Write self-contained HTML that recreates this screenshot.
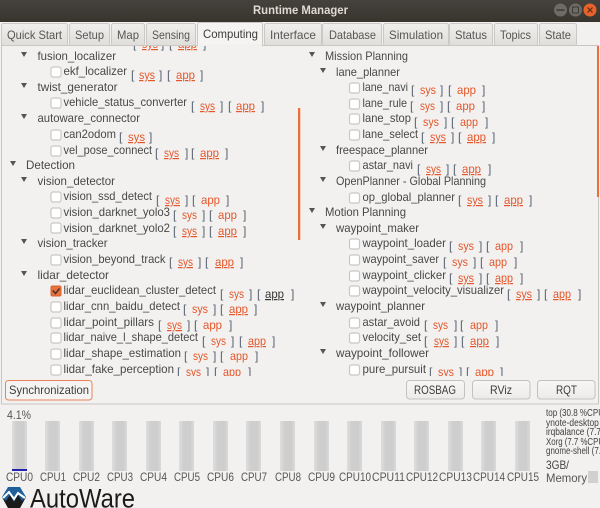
<!DOCTYPE html>
<html><head><meta charset="utf-8"><title>Runtime Manager</title>
<style>
html,body{margin:0;padding:0;background:#f2f1f0;width:600px;height:508px;overflow:hidden}
svg{display:block}
text{font-family:"Liberation Sans",sans-serif;font-size:12px;fill:#484848;white-space:pre}
.t{fill:#565654}
.b{fill:#566270}
.o{fill:#e4562a}
.u{fill:#e4562a;text-decoration:underline}
.d{fill:#333;text-decoration:underline}
.c{fill:#fff;stroke:#c9c7c4;stroke-width:1.200}
.p{font-size:10px;fill:#404040}
</style></head><body>
<svg xmlns="http://www.w3.org/2000/svg" width="600" height="508" viewBox="0 0 600 508">
<defs>
<linearGradient id="tb" x1="0" y1="0" x2="0" y2="1"><stop offset="0" stop-color="#45423c"/><stop offset="1" stop-color="#38352f"/></linearGradient>
<linearGradient id="tg" x1="0" y1="0" x2="0" y2="1"><stop offset="0" stop-color="#f0efed"/><stop offset="1" stop-color="#dfdedb"/></linearGradient>
<linearGradient id="bg" x1="0" y1="0" x2="1" y2="0"><stop offset="0" stop-color="#dedede"/><stop offset=".3" stop-color="#cfcfcf"/><stop offset=".75" stop-color="#cdcdcd"/><stop offset="1" stop-color="#dadada"/></linearGradient>
<linearGradient id="btn" x1="0" y1="0" x2="0" y2="1"><stop offset="0" stop-color="#f8f7f6"/><stop offset="1" stop-color="#ecebe9"/></linearGradient>
<clipPath id="tree"><rect x="2" y="46" width="596" height="330"/></clipPath>
<clipPath id="topc"><rect x="540" y="405" width="60" height="52"/></clipPath>
<path id="tri" d="M0 0H6L3 5Z" fill="#555"/>
</defs>
<rect width="600" height="508" fill="#f2f1f0"/>
<!-- title bar -->
<rect width="600" height="22" fill="url(#tb)"/>
<text x="253" y="14" textLength="95" lengthAdjust="spacingAndGlyphs" style="font-weight:bold;fill:#dfdbd2">Runtime Manager</text>
<circle cx="560.500" cy="10" r="6.500" fill="#6d6b64"/><rect x="556.500" y="9.300" width="8" height="1.500" fill="#3b3a35"/>
<circle cx="575.500" cy="10" r="6.500" fill="#6d6b64"/><rect x="572.500" y="7" width="6" height="6" fill="none" stroke="#3b3a35"/>
<circle cx="590" cy="10" r="6.500" fill="#e8622b"/><path d="M587.500 7.500l5 5m0-5l-5 5" stroke="#5c2a12" stroke-width="1.200"/>
<!-- panel -->
<rect x="1.500" y="45.500" width="597" height="358.500" fill="#f2f1f0" stroke="#c8c6c3"/>
<!-- tabs -->
<g fill="url(#tg)" stroke="#cbc9c5">
<rect x="1.500" y="23.500" width="66" height="22" rx="2"/>
<rect x="69.500" y="23.500" width="40" height="22" rx="2"/>
<rect x="111.500" y="23.500" width="33" height="22" rx="2"/>
<rect x="146.500" y="23.500" width="49" height="22" rx="2"/>
<rect x="264.500" y="23.500" width="57" height="22" rx="2"/>
<rect x="322.500" y="23.500" width="59" height="22" rx="2"/>
<rect x="383.500" y="23.500" width="65" height="22" rx="2"/>
<rect x="449.500" y="23.500" width="43" height="22" rx="2"/>
<rect x="494.500" y="23.500" width="43" height="22" rx="2"/>
<rect x="539.500" y="23.500" width="37" height="22" rx="2"/>
</g>
<rect x="197.500" y="22.500" width="65" height="24" rx="2" fill="#f5f4f3" stroke="#cbc9c5"/>
<rect x="198" y="44" width="64" height="3" fill="#f2f1f0"/>
<g class="tabs">
<text class="t" x="7" y="39" textLength="55" lengthAdjust="spacingAndGlyphs">Quick Start</text>
<text class="t" x="75" y="39" textLength="29" lengthAdjust="spacingAndGlyphs">Setup</text>
<text class="t" x="117" y="39" textLength="22" lengthAdjust="spacingAndGlyphs">Map</text>
<text class="t" x="152" y="39" textLength="38" lengthAdjust="spacingAndGlyphs">Sensing</text>
<text x="203" y="38" textLength="55" lengthAdjust="spacingAndGlyphs" style="fill:#3c3c3c">Computing</text>
<text class="t" x="270" y="39" textLength="46" lengthAdjust="spacingAndGlyphs">Interface</text>
<text class="t" x="329" y="39" textLength="47" lengthAdjust="spacingAndGlyphs">Database</text>
<text class="t" x="389" y="39" textLength="54" lengthAdjust="spacingAndGlyphs">Simulation</text>
<text class="t" x="455" y="39" textLength="32" lengthAdjust="spacingAndGlyphs">Status</text>
<text class="t" x="500" y="39" textLength="31" lengthAdjust="spacingAndGlyphs">Topics</text>
<text class="t" x="545" y="39" textLength="26" lengthAdjust="spacingAndGlyphs">State</text>
</g>
<!-- scrollbars -->
<rect x="298" y="108" width="2" height="132" fill="#e8703c"/>
<rect x="300" y="108" width="1" height="132" fill="#f6cdb8"/>
<rect x="597" y="46" width="2" height="151" fill="#e8703c"/>
<g clip-path="url(#tree)">
<!-- left tree -->
<text class="b" x="133" y="48">[</text><text class="u" x="142" y="48" textLength="16" lengthAdjust="spacingAndGlyphs">sys</text><text class="b" x="161" y="48">]</text><text class="b" x="169" y="48">[</text><text class="u" x="178" y="48" textLength="19" lengthAdjust="spacingAndGlyphs">app</text><text class="b" x="203" y="48">]</text>
<use href="#tri" x="21" y="52"/><text x="37.500" y="60" textLength="78.500" lengthAdjust="spacingAndGlyphs">fusion_localizer</text>
<rect class="c" x="51" y="67" width="10" height="10" rx="2"/><text x="63.500" y="75" textLength="63.500" lengthAdjust="spacingAndGlyphs">ekf_localizer</text>
<text class="b" x="131" y="79">[</text><text class="u" x="139" y="79" textLength="16" lengthAdjust="spacingAndGlyphs">sys</text><text class="b" x="159" y="79">]</text><text class="b" x="167" y="79">[</text><text class="u" x="176" y="79" textLength="19" lengthAdjust="spacingAndGlyphs">app</text><text class="b" x="200" y="79">]</text>
<use href="#tri" x="21" y="83"/><text x="37.500" y="91" textLength="80" lengthAdjust="spacingAndGlyphs">twist_generator</text>
<rect class="c" x="51" y="98" width="10" height="10" rx="2"/><text x="63.500" y="106" textLength="123.500" lengthAdjust="spacingAndGlyphs">vehicle_status_converter</text>
<text class="b" x="191" y="110">[</text><text class="u" x="200" y="110" textLength="15" lengthAdjust="spacingAndGlyphs">sys</text><text class="b" x="220" y="110">]</text><text class="b" x="228" y="110">[</text><text class="u" x="236" y="110" textLength="19" lengthAdjust="spacingAndGlyphs">app</text><text class="b" x="261" y="110">]</text>
<use href="#tri" x="21" y="114"/><text x="37.500" y="122" textLength="102.500" lengthAdjust="spacingAndGlyphs">autoware_connector</text>
<rect class="c" x="51" y="130" width="10" height="10" rx="2"/><text x="63.500" y="138" textLength="52.500" lengthAdjust="spacingAndGlyphs">can2odom</text>
<text class="b" x="119" y="141">[</text><text class="u" x="128" y="141" textLength="17" lengthAdjust="spacingAndGlyphs">sys</text><text class="b" x="149" y="141">]</text>
<rect class="c" x="51" y="146" width="10" height="10" rx="2"/><text x="63.500" y="154" textLength="88.500" lengthAdjust="spacingAndGlyphs">vel_pose_connect</text>
<text class="b" x="155" y="157">[</text><text class="u" x="164" y="157" textLength="15" lengthAdjust="spacingAndGlyphs">sys</text><text class="b" x="185" y="157">]</text><text class="b" x="191" y="157">[</text><text class="u" x="200" y="157" textLength="19" lengthAdjust="spacingAndGlyphs">app</text><text class="b" x="225" y="157">]</text>
<use href="#tri" x="10" y="161"/><text x="26" y="169" textLength="49" lengthAdjust="spacingAndGlyphs">Detection</text>
<use href="#tri" x="21" y="177"/><text x="37.500" y="185" textLength="77.500" lengthAdjust="spacingAndGlyphs">vision_detector</text>
<rect class="c" x="51" y="192" width="10" height="10" rx="2"/><text x="63.500" y="200" textLength="88.500" lengthAdjust="spacingAndGlyphs">vision_ssd_detect</text>
<text class="b" x="156" y="204">[</text><text class="u" x="165" y="204" textLength="15" lengthAdjust="spacingAndGlyphs">sys</text><text class="b" x="185" y="204">]</text><text class="b" x="192" y="204">[</text><text class="o" x="201" y="204" textLength="19" lengthAdjust="spacingAndGlyphs">app</text><text class="b" x="226" y="204">]</text>
<rect class="c" x="51" y="208" width="10" height="10" rx="2"/><text x="63.500" y="216" textLength="106.500" lengthAdjust="spacingAndGlyphs">vision_darknet_yolo3</text>
<text class="b" x="173" y="219">[</text><text class="o" x="182" y="219" textLength="15" lengthAdjust="spacingAndGlyphs">sys</text><text class="b" x="202" y="219">]</text><text class="b" x="209" y="219">[</text><text class="o" x="218" y="219" textLength="19" lengthAdjust="spacingAndGlyphs">app</text><text class="b" x="243" y="219">]</text>
<rect class="c" x="51" y="223" width="10" height="10" rx="2"/><text x="63.500" y="232" textLength="106.500" lengthAdjust="spacingAndGlyphs">vision_darknet_yolo2</text>
<text class="b" x="173" y="235">[</text><text class="u" x="182" y="235" textLength="15" lengthAdjust="spacingAndGlyphs">sys</text><text class="b" x="202" y="235">]</text><text class="b" x="209" y="235">[</text><text class="u" x="218" y="235" textLength="19" lengthAdjust="spacingAndGlyphs">app</text><text class="b" x="243" y="235">]</text>
<use href="#tri" x="21" y="239"/><text x="37.500" y="247" textLength="70" lengthAdjust="spacingAndGlyphs">vision_tracker</text>
<rect class="c" x="51" y="255" width="10" height="10" rx="2"/><text x="63.500" y="263" textLength="102" lengthAdjust="spacingAndGlyphs">vision_beyond_track</text>
<text class="b" x="169" y="266">[</text><text class="u" x="178" y="266" textLength="15" lengthAdjust="spacingAndGlyphs">sys</text><text class="b" x="198" y="266">]</text><text class="b" x="205" y="266">[</text><text class="u" x="215" y="266" textLength="19" lengthAdjust="spacingAndGlyphs">app</text><text class="b" x="240" y="266">]</text>
<use href="#tri" x="21" y="271"/><text x="37.500" y="279" textLength="71.500" lengthAdjust="spacingAndGlyphs">lidar_detector</text>
<rect x="51" y="286" width="10" height="10" rx="1.500" fill="#e8703c" stroke="#d8602c"/><path d="M52.800 290.500l2.700 3 4-5" fill="none" stroke="#4a3028" stroke-width="1.500"/>
<text x="63.500" y="294" textLength="152.500" lengthAdjust="spacingAndGlyphs">lidar_euclidean_cluster_detect</text>
<text class="b" x="220" y="298">[</text><text class="o" x="229" y="298" textLength="15" lengthAdjust="spacingAndGlyphs">sys</text><text class="b" x="249" y="298">]</text><text class="b" x="257" y="298">[</text><text class="d" x="265" y="298" textLength="19" lengthAdjust="spacingAndGlyphs">app</text><text class="b" x="291" y="298">]</text>
<rect class="c" x="51" y="302" width="10" height="10" rx="2"/><text x="63.500" y="310" textLength="116.500" lengthAdjust="spacingAndGlyphs">lidar_cnn_baidu_detect</text>
<text class="b" x="183" y="313">[</text><text class="o" x="192" y="313" textLength="16" lengthAdjust="spacingAndGlyphs">sys</text><text class="b" x="213" y="313">]</text><text class="b" x="220" y="313">[</text><text class="u" x="229" y="313" textLength="19" lengthAdjust="spacingAndGlyphs">app</text><text class="b" x="254" y="313">]</text>
<rect class="c" x="51" y="318" width="10" height="10" rx="2"/><text x="63.500" y="326" textLength="90.500" lengthAdjust="spacingAndGlyphs">lidar_point_pillars</text>
<text class="b" x="158" y="329">[</text><text class="u" x="167" y="329" textLength="15" lengthAdjust="spacingAndGlyphs">sys</text><text class="b" x="187" y="329">]</text><text class="b" x="194" y="329">[</text><text class="o" x="203" y="329" textLength="19" lengthAdjust="spacingAndGlyphs">app</text><text class="b" x="229" y="329">]</text>
<rect class="c" x="51" y="333" width="10" height="10" rx="2"/><text x="63.500" y="341" textLength="134.500" lengthAdjust="spacingAndGlyphs">lidar_naive_l_shape_detect</text>
<text class="b" x="202" y="345">[</text><text class="o" x="211" y="345" textLength="15" lengthAdjust="spacingAndGlyphs">sys</text><text class="b" x="231" y="345">]</text><text class="b" x="239" y="345">[</text><text class="u" x="248" y="345" textLength="18" lengthAdjust="spacingAndGlyphs">app</text><text class="b" x="272" y="345">]</text>
<rect class="c" x="51" y="349" width="10" height="10" rx="2"/><text x="63.500" y="357" textLength="117.500" lengthAdjust="spacingAndGlyphs">lidar_shape_estimation</text>
<text class="b" x="184" y="360">[</text><text class="o" x="193" y="360" textLength="15" lengthAdjust="spacingAndGlyphs">sys</text><text class="b" x="213" y="360">]</text><text class="b" x="220" y="360">[</text><text class="o" x="230" y="360" textLength="18" lengthAdjust="spacingAndGlyphs">app</text><text class="b" x="255" y="360">]</text>
<rect class="c" x="51" y="365" width="10" height="10" rx="2"/><text x="63.500" y="373" textLength="110.500" lengthAdjust="spacingAndGlyphs">lidar_fake_perception</text>
<text class="b" x="177" y="376">[</text><text class="o" x="186" y="376" textLength="15" lengthAdjust="spacingAndGlyphs">sys</text><text class="b" x="206" y="376">]</text><text class="b" x="214" y="376">[</text><text class="o" x="223" y="376" textLength="18" lengthAdjust="spacingAndGlyphs">app</text><text class="b" x="248" y="376">]</text>
<!-- right tree -->
<use href="#tri" x="309" y="52"/><text x="325" y="60" textLength="83" lengthAdjust="spacingAndGlyphs">Mission Planning</text>
<use href="#tri" x="320" y="68"/><text x="336" y="76" textLength="64" lengthAdjust="spacingAndGlyphs">lane_planner</text>
<rect class="c" x="349.500" y="83" width="10" height="10" rx="2"/><text x="362.500" y="91" textLength="45.500" lengthAdjust="spacingAndGlyphs">lane_navi</text>
<text class="b" x="411" y="94">[</text><text class="o" x="420" y="94" textLength="16" lengthAdjust="spacingAndGlyphs">sys</text><text class="b" x="440" y="94">]</text><text class="b" x="448" y="94">[</text><text class="o" x="457" y="94" textLength="19" lengthAdjust="spacingAndGlyphs">app</text><text class="b" x="482" y="94">]</text>
<rect class="c" x="349.500" y="99" width="10" height="10" rx="2"/><text x="362.500" y="107" textLength="44.500" lengthAdjust="spacingAndGlyphs">lane_rule</text>
<text class="b" x="410" y="110">[</text><text class="o" x="420" y="110" textLength="15" lengthAdjust="spacingAndGlyphs">sys</text><text class="b" x="440" y="110">]</text><text class="b" x="447" y="110">[</text><text class="o" x="456" y="110" textLength="19" lengthAdjust="spacingAndGlyphs">app</text><text class="b" x="482" y="110">]</text>
<rect class="c" x="349.500" y="114" width="10" height="10" rx="2"/><text x="362.500" y="122" textLength="48.500" lengthAdjust="spacingAndGlyphs">lane_stop</text>
<text class="b" x="414" y="126">[</text><text class="o" x="423" y="126" textLength="16" lengthAdjust="spacingAndGlyphs">sys</text><text class="b" x="444" y="126">]</text><text class="b" x="451" y="126">[</text><text class="o" x="460" y="126" textLength="18" lengthAdjust="spacingAndGlyphs">app</text><text class="b" x="485" y="126">]</text>
<rect class="c" x="349.500" y="130" width="10" height="10" rx="2"/><text x="362.500" y="138" textLength="55.500" lengthAdjust="spacingAndGlyphs">lane_select</text>
<text class="b" x="421" y="141">[</text><text class="u" x="430" y="141" textLength="16" lengthAdjust="spacingAndGlyphs">sys</text><text class="b" x="451" y="141">]</text><text class="b" x="458" y="141">[</text><text class="u" x="467" y="141" textLength="19" lengthAdjust="spacingAndGlyphs">app</text><text class="b" x="492" y="141">]</text>
<use href="#tri" x="320" y="146"/><text x="336" y="154" textLength="92" lengthAdjust="spacingAndGlyphs">freespace_planner</text>
<rect class="c" x="349.500" y="161" width="10" height="10" rx="2"/><text x="362.500" y="169" textLength="50.500" lengthAdjust="spacingAndGlyphs">astar_navi</text>
<text class="b" x="417" y="173">[</text><text class="u" x="426" y="173" textLength="15" lengthAdjust="spacingAndGlyphs">sys</text><text class="b" x="446" y="173">]</text><text class="b" x="453" y="173">[</text><text class="u" x="462" y="173" textLength="19" lengthAdjust="spacingAndGlyphs">app</text><text class="b" x="488" y="173">]</text>
<use href="#tri" x="320" y="177"/><text x="336" y="185" textLength="150" lengthAdjust="spacingAndGlyphs">OpenPlanner - Global Planning</text>
<rect class="c" x="349.500" y="193" width="10" height="10" rx="2"/><text x="362.500" y="201" textLength="92.500" lengthAdjust="spacingAndGlyphs">op_global_planner</text>
<text class="b" x="458" y="204">[</text><text class="u" x="467" y="204" textLength="16" lengthAdjust="spacingAndGlyphs">sys</text><text class="b" x="488" y="204">]</text><text class="b" x="495" y="204">[</text><text class="u" x="504" y="204" textLength="19" lengthAdjust="spacingAndGlyphs">app</text><text class="b" x="529" y="204">]</text>
<use href="#tri" x="309" y="208"/><text x="325" y="216" textLength="81" lengthAdjust="spacingAndGlyphs">Motion Planning</text>
<use href="#tri" x="320" y="224"/><text x="336" y="232" textLength="83" lengthAdjust="spacingAndGlyphs">waypoint_maker</text>
<rect class="c" x="349.500" y="239" width="10" height="10" rx="2"/><text x="362.500" y="247" textLength="83.500" lengthAdjust="spacingAndGlyphs">waypoint_loader</text>
<text class="b" x="449" y="250">[</text><text class="o" x="458" y="250" textLength="16" lengthAdjust="spacingAndGlyphs">sys</text><text class="b" x="479" y="250">]</text><text class="b" x="486" y="250">[</text><text class="o" x="495" y="250" textLength="18" lengthAdjust="spacingAndGlyphs">app</text><text class="b" x="520" y="250">]</text>
<rect class="c" x="349.500" y="255" width="10" height="10" rx="2"/><text x="362.500" y="263" textLength="76.500" lengthAdjust="spacingAndGlyphs">waypoint_saver</text>
<text class="b" x="443" y="266">[</text><text class="o" x="452" y="266" textLength="16" lengthAdjust="spacingAndGlyphs">sys</text><text class="b" x="473" y="266">]</text><text class="b" x="480" y="266">[</text><text class="o" x="489" y="266" textLength="18" lengthAdjust="spacingAndGlyphs">app</text><text class="b" x="514" y="266">]</text>
<rect class="c" x="349.500" y="271" width="10" height="10" rx="2"/><text x="362.500" y="279" textLength="83.500" lengthAdjust="spacingAndGlyphs">waypoint_clicker</text>
<text class="b" x="449" y="282">[</text><text class="u" x="458" y="282" textLength="16" lengthAdjust="spacingAndGlyphs">sys</text><text class="b" x="479" y="282">]</text><text class="b" x="486" y="282">[</text><text class="u" x="495" y="282" textLength="18" lengthAdjust="spacingAndGlyphs">app</text><text class="b" x="520" y="282">]</text>
<rect class="c" x="349.500" y="286" width="10" height="10" rx="2"/><text x="362.500" y="294" textLength="141.500" lengthAdjust="spacingAndGlyphs">waypoint_velocity_visualizer</text>
<text class="b" x="507" y="298">[</text><text class="u" x="516" y="298" textLength="16" lengthAdjust="spacingAndGlyphs">sys</text><text class="b" x="537" y="298">]</text><text class="b" x="544" y="298">[</text><text class="u" x="553" y="298" textLength="18" lengthAdjust="spacingAndGlyphs">app</text><text class="b" x="578" y="298">]</text>
<use href="#tri" x="320" y="302"/><text x="336" y="310" textLength="89" lengthAdjust="spacingAndGlyphs">waypoint_planner</text>
<rect class="c" x="349.500" y="318" width="10" height="10" rx="2"/><text x="362.500" y="326" textLength="57.500" lengthAdjust="spacingAndGlyphs">astar_avoid</text>
<text class="b" x="424" y="329">[</text><text class="o" x="433" y="329" textLength="15" lengthAdjust="spacingAndGlyphs">sys</text><text class="b" x="454" y="329">]</text><text class="b" x="460" y="329">[</text><text class="o" x="470" y="329" textLength="18" lengthAdjust="spacingAndGlyphs">app</text><text class="b" x="495" y="329">]</text>
<rect class="c" x="349.500" y="333" width="10" height="10" rx="2"/><text x="362.500" y="341" textLength="58.500" lengthAdjust="spacingAndGlyphs">velocity_set</text>
<text class="b" x="424" y="345">[</text><text class="u" x="434" y="345" textLength="15" lengthAdjust="spacingAndGlyphs">sys</text><text class="b" x="454" y="345">]</text><text class="b" x="461" y="345">[</text><text class="u" x="470" y="345" textLength="19" lengthAdjust="spacingAndGlyphs">app</text><text class="b" x="496" y="345">]</text>
<use href="#tri" x="320" y="349"/><text x="336" y="357" textLength="93" lengthAdjust="spacingAndGlyphs">waypoint_follower</text>
<rect class="c" x="349.500" y="365" width="10" height="10" rx="2"/><text x="362.500" y="373" textLength="63.500" lengthAdjust="spacingAndGlyphs">pure_pursuit</text>
<text class="b" x="429" y="376">[</text><text class="o" x="438" y="376" textLength="16" lengthAdjust="spacingAndGlyphs">sys</text><text class="b" x="459" y="376">]</text><text class="b" x="466" y="376">[</text><text class="o" x="475" y="376" textLength="19" lengthAdjust="spacingAndGlyphs">app</text><text class="b" x="500" y="376">]</text>
</g>
<!-- buttons -->
<rect x="5.500" y="380.500" width="86.500" height="19.500" rx="3" fill="#f5f4f3" stroke="#e8845a"/>
<text x="9" y="394" textLength="80" lengthAdjust="spacingAndGlyphs" style="fill:#3c3c3c">Synchronization</text>
<rect x="406.500" y="380.500" width="58" height="18.500" rx="3" fill="url(#btn)" stroke="#c4c2bf"/>
<text x="414" y="394" textLength="42" lengthAdjust="spacingAndGlyphs" style="fill:#3c3c3c">ROSBAG</text>
<rect x="472.500" y="380.500" width="57.500" height="18.500" rx="3" fill="url(#btn)" stroke="#c4c2bf"/>
<text x="490" y="394" textLength="22" lengthAdjust="spacingAndGlyphs" style="fill:#3c3c3c">RViz</text>
<rect x="537.500" y="380.500" width="57.500" height="18.500" rx="3" fill="url(#btn)" stroke="#c4c2bf"/>
<text x="556" y="394" textLength="21" lengthAdjust="spacingAndGlyphs" style="fill:#3c3c3c">RQT</text>
<!-- CPU -->
<text x="7" y="419" textLength="24" lengthAdjust="spacingAndGlyphs" style="fill:#555">4.1%</text>
<g fill="url(#bg)">
<rect x="12" y="421" width="15" height="50"/><rect x="45" y="421" width="15" height="50"/><rect x="79" y="421" width="15" height="50"/><rect x="112" y="421" width="15" height="50"/><rect x="146" y="421" width="15" height="50"/><rect x="179" y="421" width="15" height="50"/><rect x="213" y="421" width="15" height="50"/><rect x="246" y="421" width="15" height="50"/><rect x="280" y="421" width="15" height="50"/><rect x="314" y="421" width="15" height="50"/><rect x="347" y="421" width="15" height="50"/><rect x="381" y="421" width="15" height="50"/><rect x="414" y="421" width="15" height="50"/><rect x="448" y="421" width="15" height="50"/><rect x="481" y="421" width="15" height="50"/><rect x="515" y="421" width="15" height="50"/>
</g>
<rect x="12" y="469" width="15" height="2" fill="#2222b0"/>
<g>
<text class="t" x="6" y="481" textLength="27" lengthAdjust="spacingAndGlyphs">CPU0</text>
<text class="t" x="40" y="481" textLength="26" lengthAdjust="spacingAndGlyphs">CPU1</text>
<text class="t" x="73" y="481" textLength="27" lengthAdjust="spacingAndGlyphs">CPU2</text>
<text class="t" x="107" y="481" textLength="26" lengthAdjust="spacingAndGlyphs">CPU3</text>
<text class="t" x="140" y="481" textLength="27" lengthAdjust="spacingAndGlyphs">CPU4</text>
<text class="t" x="174" y="481" textLength="26" lengthAdjust="spacingAndGlyphs">CPU5</text>
<text class="t" x="207" y="481" textLength="27" lengthAdjust="spacingAndGlyphs">CPU6</text>
<text class="t" x="241" y="481" textLength="26" lengthAdjust="spacingAndGlyphs">CPU7</text>
<text class="t" x="275" y="481" textLength="26" lengthAdjust="spacingAndGlyphs">CPU8</text>
<text class="t" x="308" y="481" textLength="27" lengthAdjust="spacingAndGlyphs">CPU9</text>
<text class="t" x="339" y="481" textLength="32" lengthAdjust="spacingAndGlyphs">CPU10</text>
<text class="t" x="372" y="481" textLength="33" lengthAdjust="spacingAndGlyphs">CPU11</text>
<text class="t" x="406" y="481" textLength="32" lengthAdjust="spacingAndGlyphs">CPU12</text>
<text class="t" x="439" y="481" textLength="33" lengthAdjust="spacingAndGlyphs">CPU13</text>
<text class="t" x="473" y="481" textLength="32" lengthAdjust="spacingAndGlyphs">CPU14</text>
<text class="t" x="507" y="481" textLength="32" lengthAdjust="spacingAndGlyphs">CPU15</text>
</g>
<!-- top list -->
<g clip-path="url(#topc)">
<text class="p" x="546" y="416" textLength="58" lengthAdjust="spacingAndGlyphs">top (30.8 %CPU</text>
<text class="p" x="546" y="426" textLength="58" lengthAdjust="spacingAndGlyphs">ynote-desktop (</text>
<text class="p" x="546" y="435" textLength="55" lengthAdjust="spacingAndGlyphs">irqbalance (7.7</text>
<text class="p" x="546" y="445" textLength="58" lengthAdjust="spacingAndGlyphs">Xorg (7.7 %CPU</text>
<text class="p" x="546" y="454" textLength="55" lengthAdjust="spacingAndGlyphs">gnome-shell (7.</text>
</g>
<text x="546" y="469" textLength="23" lengthAdjust="spacingAndGlyphs" style="fill:#444">3GB/</text>
<text x="546" y="482" textLength="41" lengthAdjust="spacingAndGlyphs" style="fill:#555">Memory</text>
<rect x="588" y="471" width="10" height="12" fill="#d0d0d0"/>
<!-- logo -->
<path d="M8 487H20L26 497 20 508H8L2 497Z" fill="#1f5f9c"/>
<path d="M2 497 8 508H20L26 497 22 501 18 495 14 502 10 495 6 501Z" fill="#1a1a1a"/>
<path d="M3 498 9 492 14 499 18 493 25 498" fill="none" stroke="#fff" stroke-width="2"/>
<text x="30" y="507.500" textLength="105" lengthAdjust="spacingAndGlyphs" style="font-size:27px;fill:#1a1a1a">AutoWare</text>
</svg>
</body></html>
